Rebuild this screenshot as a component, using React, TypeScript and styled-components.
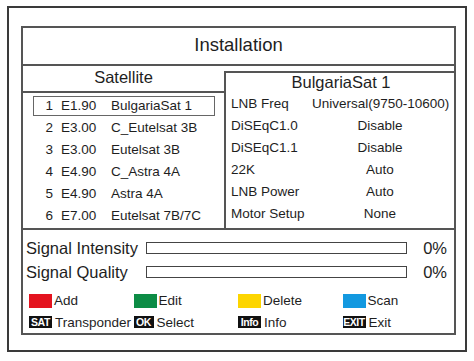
import React from "react";
import styled, { createGlobalStyle } from "styled-components";

const GlobalStyle = createGlobalStyle`
  html, body {
    margin: 0;
    padding: 0;
    background: #fff;
  }
  * { box-sizing: border-box; }
  body {
    font-family: "Liberation Sans", Arial, sans-serif;
    color: #1e1e1e;
  }
`;

const line = "#555";

const Outer = styled.div`
  margin: 6px 0 0 7px;
  width: 460px;
  height: 346px;
  border: 2px solid #3a3a3a;
  padding: 18px 11px 15px 12px;
`;

const Inner = styled.div`
  width: 435px;
  height: 309px;
  border: 2px solid ${line};
  display: flex;
  flex-direction: column;
`;

const Title = styled.div`
  height: 38px;
  border-bottom: 2px solid ${line};
  display: flex;
  align-items: center;
  justify-content: center;
  font-size: 18.5px;
  padding-bottom: 1px;
`;

const Main = styled.div`
  display: flex;
  height: 166px;
  border-bottom: 2px solid ${line};
`;

const LeftCol = styled.div`
  width: 201px;
  display: flex;
  flex-direction: column;
`;

const LeftHeader = styled.div`
  height: 27px;
  border-bottom: 2px solid ${line};
  display: flex;
  align-items: center;
  justify-content: center;
  font-size: 16.5px;
  padding-bottom: 1px;
`;

const List = styled.div`
  padding: 2px 0 0 10px;
`;

const SatRow = styled.div<{ $selected?: boolean }>`
  width: 182px;
  height: 22px;
  display: flex;
  align-items: center;
  font-size: 13.5px;
  border: 1px solid ${(p) => (p.$selected ? "#666" : "transparent")};
  margin: ${(p) => (p.$selected ? "1px 0" : "0")};
  height: ${(p) => (p.$selected ? "20px" : "22px")};
`;

const Num = styled.span`
  width: 19px;
  text-align: right;
`;

const Pos = styled.span`
  width: 50px;
  margin-left: 8px;
`;

const RightCol = styled.div`
  flex: 1;
  padding-top: 5px;
`;

const Panel = styled.div`
  height: 100%;
  border-top: 2px solid ${line};
  border-left: 2px solid ${line};
`;

const PanelHeader = styled.div`
  height: 20px;
  display: flex;
  align-items: center;
  justify-content: center;
  font-size: 16.5px;
  padding-left: 2px;
`;

const Settings = styled.div`
  display: grid;
  grid-template-columns: 81px 136px;
  grid-auto-rows: 22px;
  padding-left: 5px;
  font-size: 13.5px;
  align-items: center;
`;

const Value = styled.span`
  text-align: center;
  white-space: nowrap;
`;

const Bottom = styled.div`
  flex: 1;
  padding: 6px 0 0 3px;
  display: flex;
  flex-direction: column;
`;

const SignalRow = styled.div`
  height: 24px;
  display: flex;
  align-items: center;
  font-size: 16.5px;
`;

const SignalLabel = styled.span`
  width: 120px;
`;

const Bar = styled.div`
  width: 261px;
  height: 12px;
  border: 1.5px solid #444;
`;

const Percent = styled.span`
  width: 40px;
  text-align: right;
`;

const Legend = styled.div`
  display: grid;
  grid-template-columns: repeat(4, 104.5px);
  grid-auto-rows: 21.5px;
  padding: 6px 0 0 3px;
  font-size: 13.5px;
`;

const LegendItem = styled.div`
  display: flex;
  align-items: center;
  white-space: nowrap;
`;

const ColorKey = styled.span<{ $color: string }>`
  width: 23px;
  height: 14px;
  background: ${(p) => p.$color};
  margin-right: 2px;
`;

const Badge = styled.span<{ $w: number }>`
  width: ${(p) => p.$w}px;
  height: 12px;
  background: #111;
  color: #fff;
  font-weight: bold;
  font-size: 10.5px;
  letter-spacing: -0.4px;
  display: inline-flex;
  align-items: center;
  justify-content: center;
  margin-right: 3px;
  line-height: 1;
`;

const satellites = [
  ["1", "E1.90", "BulgariaSat 1"],
  ["2", "E3.00", "C_Eutelsat 3B"],
  ["3", "E3.00", "Eutelsat 3B"],
  ["4", "E4.90", "C_Astra 4A"],
  ["5", "E4.90", "Astra 4A"],
  ["6", "E7.00", "Eutelsat 7B/7C"],
];

const settings = [
  ["LNB Freq", "Universal(9750-10600)"],
  ["DiSEqC1.0", "Disable"],
  ["DiSEqC1.1", "Disable"],
  ["22K", "Auto"],
  ["LNB Power", "Auto"],
  ["Motor Setup", "None"],
];

export default function App() {
  return (
    <>
      <GlobalStyle />
      <Outer>
        <Inner>
          <Title>Installation</Title>
          <Main>
            <LeftCol>
              <LeftHeader>Satellite</LeftHeader>
              <List>
                {satellites.map(([n, pos, name], i) => (
                  <SatRow key={n} $selected={i === 0}>
                    <Num>{n}</Num>
                    <Pos>{pos}</Pos>
                    <span>{name}</span>
                  </SatRow>
                ))}
              </List>
            </LeftCol>
            <RightCol>
              <Panel>
                <PanelHeader>BulgariaSat 1</PanelHeader>
                <Settings>
                  {settings.map(([label, value]) => (
                    <React.Fragment key={label}>
                      <span>{label}</span>
                      <Value>{value}</Value>
                    </React.Fragment>
                  ))}
                </Settings>
              </Panel>
            </RightCol>
          </Main>
          <Bottom>
            <SignalRow>
              <SignalLabel>Signal Intensity</SignalLabel>
              <Bar />
              <Percent>0%</Percent>
            </SignalRow>
            <SignalRow>
              <SignalLabel>Signal Quality</SignalLabel>
              <Bar />
              <Percent>0%</Percent>
            </SignalRow>
            <Legend>
              <LegendItem>
                <ColorKey $color="#e4141f" />
                Add
              </LegendItem>
              <LegendItem>
                <ColorKey $color="#0c8c45" />
                Edit
              </LegendItem>
              <LegendItem>
                <ColorKey $color="#fdd500" />
                Delete
              </LegendItem>
              <LegendItem>
                <ColorKey $color="#1399e0" />
                Scan
              </LegendItem>
              <LegendItem>
                <Badge $w={23}>SAT</Badge>
                Transponder
              </LegendItem>
              <LegendItem>
                <Badge $w={20}>OK</Badge>
                Select
              </LegendItem>
              <LegendItem>
                <Badge $w={23}>Info</Badge>
                Info
              </LegendItem>
              <LegendItem>
                <Badge $w={23}>EXIT</Badge>
                Exit
              </LegendItem>
            </Legend>
          </Bottom>
        </Inner>
      </Outer>
    </>
  );
}
